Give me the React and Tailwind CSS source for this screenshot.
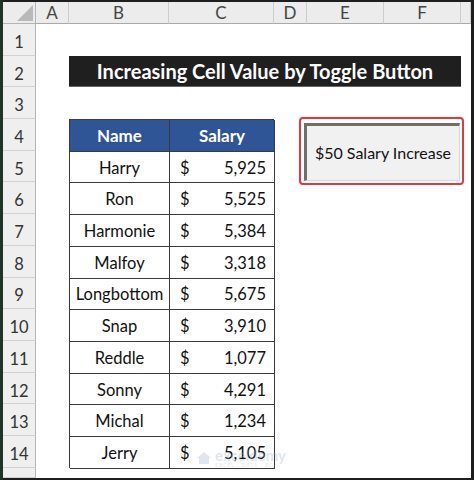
const cols = ['A', 'B', 'C', 'D', 'E', 'F', ''];

const staff = [
  { name: 'Harry', salary: '5,925' },
  { name: 'Ron', salary: '5,525' },
  { name: 'Harmonie', salary: '5,384' },
  { name: 'Malfoy', salary: '3,318' },
  { name: 'Longbottom', salary: '5,675' },
  { name: 'Snap', salary: '3,910' },
  { name: 'Reddle', salary: '1,077' },
  { name: 'Sonny', salary: '4,291' },
  { name: 'Michal', salary: '1,234' },
  { name: 'Jerry', salary: '5,105' },
];

const font = { fontFamily: 'Lato, "Open Sans", sans-serif' };

export default function App() {
  return (
    <div className="w-[474px] h-[480px] bg-[#1e1e1e] pt-[2px] pr-[3px] pb-[2px] border-l-[3px] border-[#1f3326] overflow-hidden" style={font}>
      <div className="relative h-full bg-white grid grid-cols-[33px_33px_100px_105px_33px_77px_77px_10px] grid-rows-[22px_repeat(14,31.7px)_1fr] overflow-hidden">
        {/* corner */}
        <div className="bg-[#ececec] border-r border-b border-[#b4b4b4] flex items-end justify-end p-[2px]">
          <svg width="16" height="16" viewBox="0 0 16 16">
            <polygon points="16,0 16,16 0,16" fill="#b9b9b9" />
          </svg>
        </div>
        {cols.map((c, i) => (
          <div key={i} className="bg-[#ececec] border-r border-b border-r-[#cdcdcd] border-b-[#a9a9a9] flex items-center justify-center text-[17px] text-[#444]">
            {c}
          </div>
        ))}

        {/* row headers */}
        {Array.from({ length: 15 }, (_, i) => (
          <div key={i} style={{ gridColumn: 1, gridRow: i + 2 }} className="bg-[#efefef] border-r border-b border-r-[#b4b4b4] border-b-[#d2d2d2] flex items-center justify-center pt-[6px] text-[16.5px] text-[#333]">
            {i < 14 ? i + 1 : ''}
          </div>
        ))}

        {/* title */}
        <div className="col-start-3 col-span-5 row-start-3 bg-[#1f1f1f] border-b border-[#666] flex items-center justify-center text-white font-bold text-[20px]">
          Increasing Cell Value by Toggle Button
        </div>

        {/* table */}
        <div className="col-start-3 col-span-2 row-start-5 row-span-11 grid grid-cols-[100px_105px] grid-rows-[repeat(11,31.7px)] border-l border-t border-[#3a3a3a] text-[16.5px] text-[#111]">
          <div className="bg-[#2f5597] border-r border-b border-[#3a3a3a] flex items-center justify-center text-white font-bold text-[17px]">Name</div>
          <div className="bg-[#2f5597] border-r border-b border-[#3a3a3a] flex items-center justify-center text-white font-bold text-[17px]">Salary</div>
          {staff.map(s => (
            <div key={s.name} className="contents">
              <div className="border-r border-b border-[#3a3a3a] flex items-center justify-center pt-[2px]">{s.name}</div>
              <div className="border-r border-b border-[#3a3a3a] flex items-center justify-between pl-[10px] pr-[8px] pt-[2px]">
                <span>$</span>
                <span>{s.salary}</span>
              </div>
            </div>
          ))}
        </div>

        {/* toggle button, highlighted */}
        <div className="col-start-6 col-span-2 row-start-5 row-span-2 -ml-[8px] -mr-[3px] -mt-[2px] -mb-[3px] border-2 border-[#e03a3c] rounded-[4px] pl-[3px] pr-[2px] pt-[4px] pb-[2px] flex">
          <div className="flex-1 bg-[#f1f1f1] border-t-[3px] border-l-[3px] border-r border-b border-t-[#6f6f6f] border-l-[#6f6f6f] border-r-[#d6d6d6] border-b-[#d6d6d6] flex items-center justify-center text-[16px] text-[#111]">
            $50 Salary Increase
          </div>
        </div>

        {/* watermark */}
        <div className="absolute left-[193px] top-[446px] flex items-center gap-[3px] opacity-30 pointer-events-none">
          <svg width="16" height="14" viewBox="0 0 16 14">
            <path d="M8 1 L15 7 L13 7 L13 13 L3 13 L3 7 L1 7 Z" fill="#9fb0c8" />
          </svg>
          <div className="leading-none">
            <div className="text-[15px] text-[#9fb0c8] font-bold">exceldemy</div>
            <div className="text-[5px] tracking-[1px] text-[#9fb0c8]">EXCEL · DATA · BI</div>
          </div>
        </div>
      </div>
    </div>
  );
}
